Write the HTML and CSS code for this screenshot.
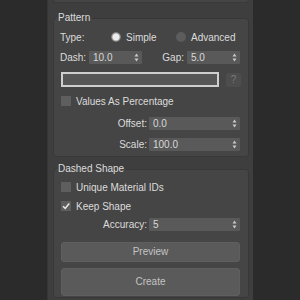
FILE: index.html
```html
<!DOCTYPE html>
<html>
<head>
<meta charset="utf-8">
<link rel="stylesheet" href="styles.css">
</head>
<body>
<div class="panel">
  <div class="prev-group"></div>

  <fieldset class="group group-pattern">
    <legend>Pattern</legend>
    <div class="row type-row">
      <span class="lbl type-lbl">Type:</span>
      <label class="radio opt-simple"><span class="dot on"></span>Simple</label>
      <label class="radio"><span class="dot"></span>Advanced</label>
    </div>
    <div class="row dash-row">
      <span class="lbl dash-lbl">Dash:</span>
      <div class="spin short"><span class="val">10.0</span><svg class="arrows" width="5" height="9" viewBox="0 0 5 9"><path d="M2.5 0.5 L4.5 3.5 L0.5 3.5Z M2.5 8.5 L4.5 5.5 L0.5 5.5Z" fill="#c9c9c9"/></svg></div>
      <span class="lbl gap-lbl">Gap:</span>
      <div class="spin short"><span class="val">5.0</span><svg class="arrows" width="5" height="9" viewBox="0 0 5 9"><path d="M2.5 0.5 L4.5 3.5 L0.5 3.5Z M2.5 8.5 L4.5 5.5 L0.5 5.5Z" fill="#c9c9c9"/></svg></div>
    </div>
    <div class="row bar-row">
      <div class="pattern-bar"></div>
      <div class="help-btn">?</div>
    </div>
    <div class="row check-row pct-row">
      <span class="cbox"></span><span>Values As Percentage</span>
    </div>
    <div class="row field-row offset-row">
      <span class="lbl field-lbl">Offset:</span>
      <div class="spin wide"><span class="val">0.0</span><svg class="arrows" width="5" height="9" viewBox="0 0 5 9"><path d="M2.5 0.5 L4.5 3.5 L0.5 3.5Z M2.5 8.5 L4.5 5.5 L0.5 5.5Z" fill="#c9c9c9"/></svg></div>
    </div>
    <div class="row field-row scale-row">
      <span class="lbl field-lbl">Scale:</span>
      <div class="spin wide"><span class="val">100.0</span><svg class="arrows" width="5" height="9" viewBox="0 0 5 9"><path d="M2.5 0.5 L4.5 3.5 L0.5 3.5Z M2.5 8.5 L4.5 5.5 L0.5 5.5Z" fill="#c9c9c9"/></svg></div>
    </div>
  </fieldset>

  <fieldset class="group group-shape">
    <legend>Dashed Shape</legend>
    <div class="row check-row unique-row">
      <span class="cbox"></span><span>Unique Material IDs</span>
    </div>
    <div class="row check-row keep-row">
      <span class="cbox checked"><svg width="10" height="10" viewBox="0 0 10 10"><path d="M2 5.2 L4.2 7.4 L8.2 2.4" fill="none" stroke="#e6e6e6" stroke-width="1.6"/></svg></span><span>Keep Shape</span>
    </div>
    <div class="row field-row acc-row">
      <span class="lbl field-lbl">Accuracy:</span>
      <div class="spin wide"><span class="val">5</span><svg class="arrows" width="5" height="9" viewBox="0 0 5 9"><path d="M2.5 0.5 L4.5 3.5 L0.5 3.5Z M2.5 8.5 L4.5 5.5 L0.5 5.5Z" fill="#c9c9c9"/></svg></div>
    </div>
    <div class="btn btn-preview">Preview</div>
    <div class="btn btn-create">Create</div>
  </fieldset>
</div>
</body>
</html>
```

FILE: styles.css
```css
html, body {
  margin: 0;
  padding: 0;
  width: 300px;
  height: 300px;
  overflow: hidden;
  background: #2b2b2b;
  font-family: "Liberation Sans", Arial, sans-serif;
  font-size: 10px;
  color: #dcdcdc;
}

.panel {
  margin-left: 47px;
  width: 196px;
  height: 300px;
  overflow: hidden;
  padding: 0 4px 0 5px;
  background: #3e3e3e;
  border-left: 1px solid #363636;
  box-sizing: content-box;
}

.prev-group {
  height: 2px;
  background: #454545;
  border: 1px solid #3a3a3a;
  border-top: none;
  border-radius: 0 0 3px 3px;
}

.group {
  margin: 9px 0 0 0;
  padding: 0 8px 5px 6px;
  border: 1px solid #383838;
  border-radius: 3px;
  background: #454545;
  min-width: 0;
}

.group legend {
  margin-left: -4px;
  padding: 0 2px;
  line-height: 12px;
  height: 12px;
  color: #dcdcdc;
}

.group-shape {
  margin-top: 6px;
  height: 128px;
}

.row {
  display: flex;
  align-items: center;
}

.lbl { white-space: nowrap; }

.type-row { height: 14px; margin-top: 6px; }
.type-lbl { width: 51px; }
.radio {
  display: flex;
  align-items: center;
  gap: 5px;
}
.opt-simple { width: 65px; }
.dot {
  width: 10px;
  height: 10px;
  border-radius: 50%;
  background: #5c5c5c;
}
.dot.on {
  background: radial-gradient(circle, #ececec 0 3px, #9a9a9a 4px, #6a6a6a 5px);
}

.dash-row { height: 13px; margin-top: 7px; }
.dash-lbl { width: 29px; }
.gap-lbl { flex: 1; text-align: right; padding-right: 3px; }

.spin {
  height: 13px;
  background: #595959;
  border-radius: 1px;
  display: flex;
  align-items: center;
  justify-content: space-between;
  padding: 0 3px 0 4px;
  box-sizing: border-box;
}
.spin.short { width: 53px; }
.spin.wide { width: 91px; }
.spin .val { color: #d8d8d8; line-height: 13px; }
.arrows { display: block; }

.bar-row {
  height: 15px;
  margin-top: 8px;
  justify-content: space-between;
  padding-left: 1px;
}
.pattern-bar {
  width: 154px;
  height: 11px;
  border: 2px solid #cfcfcf;
  background: #575757;
}
.help-btn {
  width: 15px;
  height: 14px;
  margin-right: -1px;
  background: #4d4d4d;
  border-radius: 2px;
  color: #7a7a7a;
  text-align: center;
  line-height: 14px;
  font-size: 10px;
}

.check-row {
  height: 12px;
  gap: 5px;
  padding-left: 1px;
}
.pct-row { margin-top: 8px; }
.cbox {
  width: 10px;
  height: 10px;
  background: #5e5e5e;
  display: block;
}
.cbox svg { display: block; }

.field-row { height: 13px; }
.offset-row { margin-top: 10px; }
.scale-row { margin-top: 8px; }
.field-lbl {
  width: 89px;
  text-align: right;
  padding-right: 2px;
  box-sizing: border-box;
}

.unique-row { margin-top: 6px; }
.keep-row { margin-top: 7px; }
.acc-row { margin-top: 6px; }

.btn {
  margin-left: 1px;
  width: 179px;
  background: #5a5a5a;
  border-radius: 3px;
  color: #c4c4c4;
  text-align: center;
  box-sizing: border-box;
  border: 1px solid #5f5f5f;
}
.btn-preview {
  height: 20px;
  line-height: 18px;
  margin-top: 11px;
}
.btn-create {
  height: 28px;
  line-height: 26px;
  margin-top: 6px;
}
```
